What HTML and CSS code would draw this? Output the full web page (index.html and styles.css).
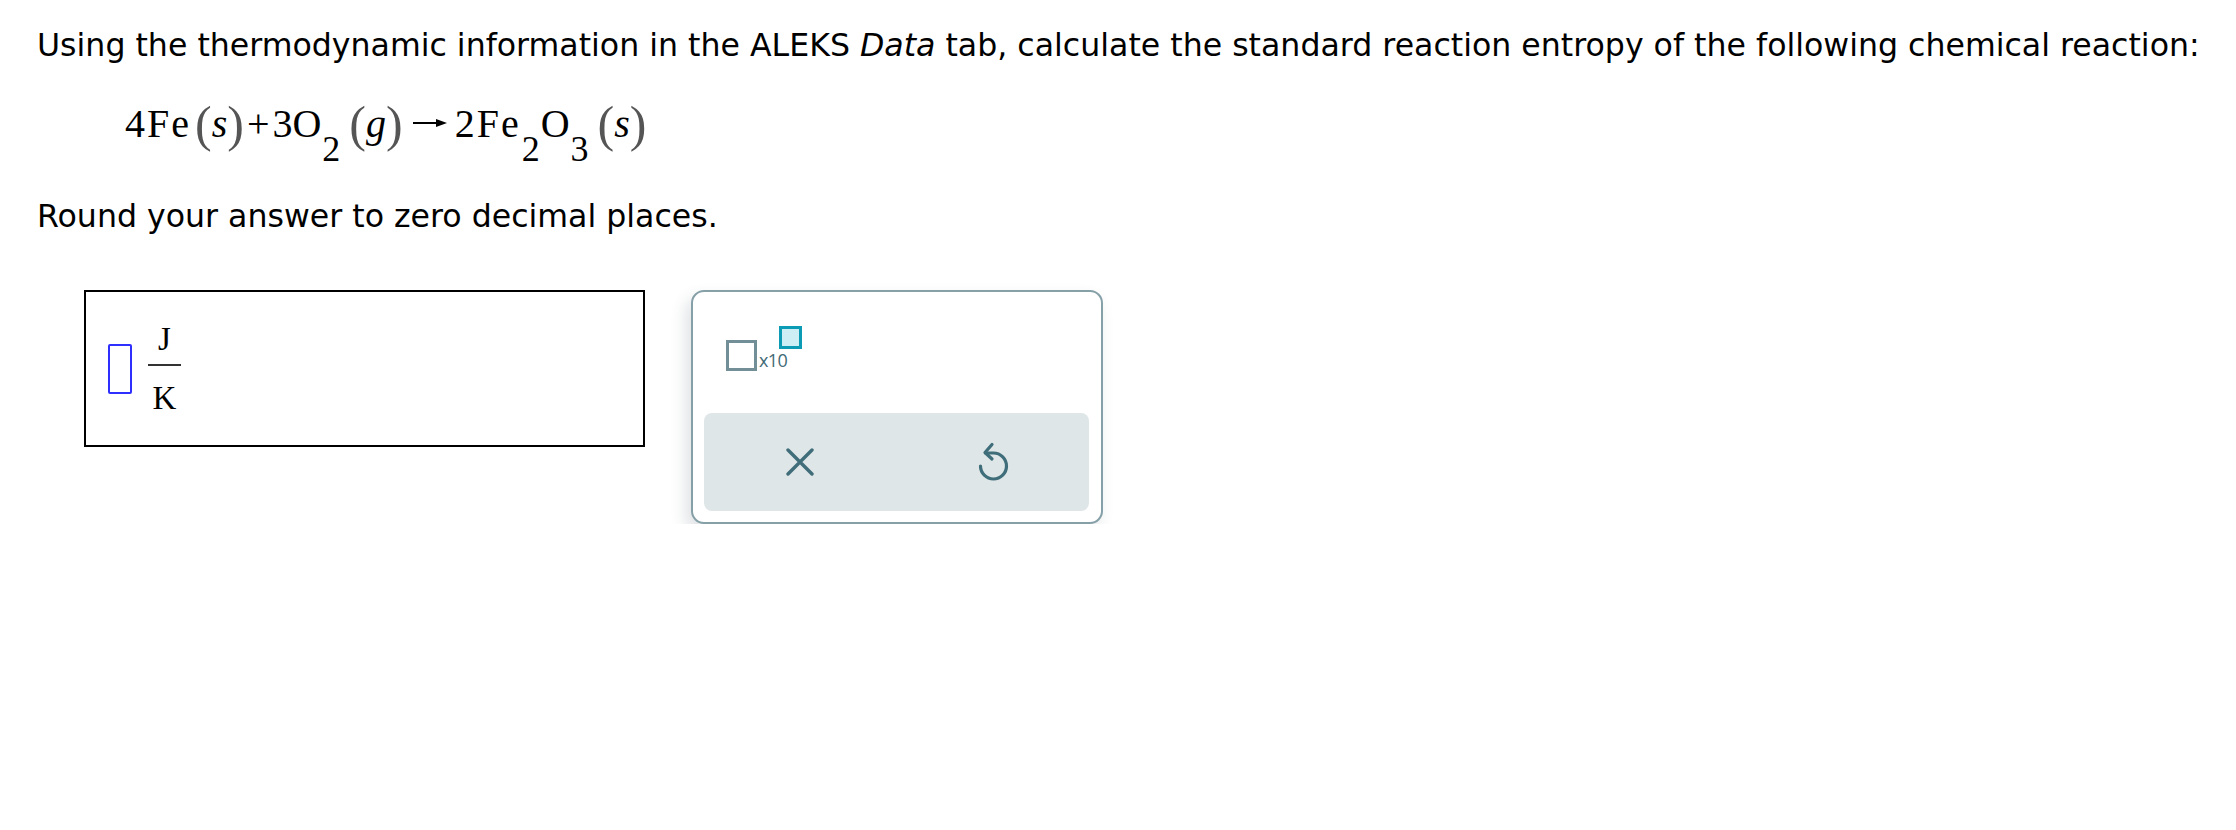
FILE: index.html
```html
<!DOCTYPE html>
<html lang="en">
<head>
<meta charset="utf-8">
<title>ALEKS question</title>
<link rel="stylesheet" href="styles.css">
</head>
<body>
<div class="page">
  <p class="prompt">Using the thermodynamic information in the ALEKS <i>Data</i> tab, calculate the standard reaction entropy of the following chemical reaction:</p>
  <div class="eq"><span class="t wide">4Fe</span><span class="paren">(</span><i class="ph">s</i><span class="paren">)</span><span class="op">+</span><span class="t">3O</span><span class="sub">2</span><span class="sp"></span><span class="paren">(</span><i class="ph">g</i><span class="paren">)</span><svg class="arrow" width="34" height="10" viewBox="0 0 34 10" role="img" aria-label="yields"><path d="M0 5 H25" stroke="#000" stroke-width="2"/><path d="M23 1 L34 5 L23 9 Z" fill="#000"/></svg><span class="t wide last">2Fe</span><span class="sub">2</span><span class="t">O</span><span class="sub">3</span><span class="sp"></span><span class="paren">(</span><i class="ph">s</i><span class="paren">)</span></div>
  <p class="prompt round">Round your answer to zero decimal places.</p>
  <div class="answer-row">
    <div class="answer-box">
      <span class="slot"></span>
      <span class="frac"><span class="num">J</span><span class="bar"></span><span class="den">K</span></span>
    </div>
    <div class="tools">
      <div class="sci">
        <span class="sq"></span><span class="x10">x10</span><span class="sup"></span>
      </div>
      <div class="actions">
        <button class="btn" type="button" aria-label="Clear">
          <svg width="28" height="28" viewBox="0 0 28 28"><path d="M2 2 L26 26 M26 2 L2 26" fill="none" stroke="#3f6e7a" stroke-width="3.4" stroke-linecap="round"/></svg>
        </button>
        <button class="btn" type="button" aria-label="Reset">
          <svg width="32" height="40" viewBox="0 0 32 40"><path d="M8.5 11 H16.5 A13 13 0 1 1 3.5 24" fill="none" stroke="#3f6e7a" stroke-width="3.2" stroke-linecap="round" stroke-linejoin="round"/><path d="M15 2.5 L8 10.5 L15 17" fill="none" stroke="#3f6e7a" stroke-width="3.2" stroke-linecap="round" stroke-linejoin="round"/></svg>
        </button>
      </div>
    </div>
  </div>
</div>
</body>
</html>
```
FILE: styles.css
```css
* { box-sizing: border-box; }
body {
  margin: 0;
  background: #fff;
  color: #000;
  font-family: "DejaVu Sans", Verdana, sans-serif;
}
.page { padding: 26px 0 0 37px; }
.prompt {
  margin: 0;
  font-size: 31.6px;
  line-height: 38px;
  white-space: nowrap;
}
.eq {
  margin: 35.5px 0 0 88px;
  height: 48px;
  font-family: "Liberation Serif", "Times New Roman", serif;
  font-size: 40px;
  line-height: 48px;
  white-space: nowrap;
}
.eq .wide { letter-spacing: 2px; margin-right: 4px; }
.eq .wide.last { margin-right: 0; }
.eq .sp { display: inline-block; width: 8px; }
.eq .paren {
  font-size: 50px;
  line-height: 0;
  color: #555;
  vertical-align: -4px;
}
.eq .op { padding: 0 3px; }
.eq .sub {
  font-size: 36px;
  line-height: 0;
  vertical-align: -24px;
  padding: 0 1px;
}
.eq .arrow {
  margin: 0 8px 0 10px;
  vertical-align: 9px;
}
.round { margin-top: 49.5px; }
.answer-row {
  display: flex;
  align-items: flex-start;
  gap: 46px;
  margin: 55px 0 0 47px;
}
.answer-box {
  width: 561px;
  height: 157px;
  border: 2px solid #000;
  display: flex;
  align-items: center;
  padding-left: 22px;
  gap: 16px;
}
.slot {
  width: 24px;
  height: 50px;
  border: 2.5px solid #2e2eff;
  border-radius: 2px;
}
.frac {
  display: flex;
  flex-direction: column;
  align-items: center;
  width: 33px;
  font-family: "Liberation Serif", "Times New Roman", serif;
  font-size: 33px;
  line-height: 33px;
}
.frac .bar {
  width: 33px;
  height: 2px;
  background: #333;
  margin: 8px 0 16px;
}
.tools {
  width: 412px;
  height: 234px;
  border: 2px solid #86a0a8;
  border-radius: 13px;
  background: #fff;
  box-shadow: -5px 8px 16px rgba(50, 70, 80, 0.16);
  padding: 0 12px 11px 11px;
  display: flex;
  flex-direction: column;
}
.sci {
  height: 121px;
  padding: 34px 0 0 22px;
  display: flex;
  align-items: flex-start;
}
.sq {
  width: 31px;
  height: 31px;
  border: 3px solid #728f97;
  margin-top: 14px;
}
.x10 {
  font-family: "Open Sans", Lato, sans-serif;
  font-size: 18px;
  line-height: 18px;
  color: #3f6a76;
  margin: 25px 0 0 2px;
  letter-spacing: -0.6px;
}
.sup {
  width: 23px;
  height: 23px;
  border: 3px solid #0c9bb5;
  background: #cdeef4;
  margin-left: -8px;
}
.actions {
  flex: 1;
  background: #dfe6e8;
  border-radius: 8px;
  display: flex;
}
.btn {
  flex: 1;
  display: flex;
  align-items: center;
  justify-content: center;
  border: 0;
  background: transparent;
  padding: 0;
  cursor: pointer;
}
```
